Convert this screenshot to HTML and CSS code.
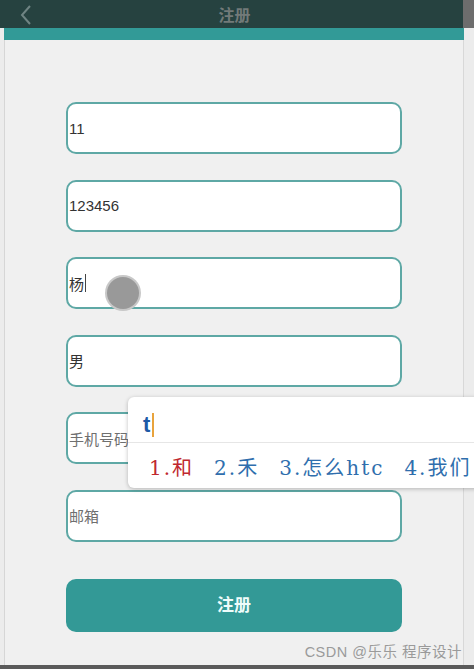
FILE: index.html
```html
<!doctype html>
<html lang='zh-CN'>
<head>
  <title>注册</title>
  <meta charset='utf-8'>
  <link rel="stylesheet" href="styles.css">
</head>
<body>
  <div class='screen'>
    <header class='topbar'>
      <div class='appbar'>
        <svg class='back' width='14' height='22' viewBox='0 0 14 22'>
          <path d='M11 2 L3 11 L11 20' fill='none' stroke='#6f8483' stroke-width='2'/>
        </svg>
        <h1>注册</h1>
      </div>
      <div class='edge'></div>
    </header>

    <main class='frame'>
      <div class='accent'></div>
      <form class='form'>
        <div class='field'>11</div>
        <div class='field'>123456</div>
        <div class='field'>杨<i class='caret'></i></div>
        <div class='field'>男</div>
        <div class='field hint'>手机号码</div>
        <div class='field hint'>邮箱</div>
        <button type='button' class='submit'>注册</button>
      </form>
      <p class='mark'>CSDN @乐乐 程序设计</p>
    </main>
    <div class='bottom'></div>

    <div class='touch'></div>

    <div class='ime'>
      <div class='ime-input'>t<i class='ime-caret'></i></div>
      <ol class='ime-list'>
        <li class='first'>1.和</li>
        <li>2.禾</li>
        <li>3.怎么htc</li>
        <li>4.我们</li>
      </ol>
    </div>
  </div>
</body>
</html>
```

FILE: styles.css
```css
*, html { box-sizing: border-box; }
body { margin: 0; background: #ececec; font: 15px "Liberation Sans", "Noto Sans CJK SC", sans-serif; color: #333; }

.screen { position: relative; width: 474px; height: 669px; overflow: hidden; }

.topbar { display: flex; height: 28px; }
.appbar { width: 463px; background: #264240; position: relative; display: flex; align-items: center; justify-content: center; }
.appbar h1 { margin: 0 0 0 6px; font-size: 16px; font-weight: bold; color: #727a79; }
.back { position: absolute; left: 19px; top: 4px; }
.edge { flex: 1; background: #6d6d6d; }

.frame { margin-left: 4px; width: 460px; height: 637px; background: #f0f0f0; border-left: 1px solid #d6d6d6; border-right: 1px solid #d8d8d8; position: relative; }
.accent { height: 12px; background: #329a97; margin-left: -1px; margin-right: -1px; }

.form { padding: 62px 0 0 61px; display: flex; flex-direction: column; gap: 25.6px; }
.field { width: 336px; height: 52px; background: #fff; border: 2px solid #5ea8a5; border-radius: 10px; display: flex; align-items: center; padding-left: 1px; font-size: 15px; color: #333; }
.field.hint { color: #6f6f6f; }
.caret { display: inline-block; width: 1px; height: 18px; background: #444; margin-left: 1px; }

.submit { margin-top: 11px; width: 336px; height: 53px; padding-bottom: 5px; border: 0; border-radius: 10px; background: #339996; color: #effcfb; font: bold 17px "Noto Sans CJK SC", sans-serif; }

.mark { position: absolute; right: 1px; top: 612px; margin: 0; font: 14.5px "Liberation Sans", "Noto Sans CJK SC", sans-serif; letter-spacing: 0.5px; color: #9a9a9a; }

.bottom { height: 4px; background: #5a5a5a; }

.touch { position: absolute; left: 107px; top: 277px; width: 32px; height: 32px; border-radius: 50%; background: #999; box-shadow: 0 0 0 2px #c8c8c8; }

.ime { position: absolute; left: 128px; top: 397px; width: 370px; height: 91px; background: #fff; border-radius: 6px; box-shadow: 0 1px 4px rgba(0,0,0,0.25); }
.ime-input { height: 46px; padding: 10px 0 0 15px; border-bottom: 1px solid #e6e6e6; font: bold 22px "Liberation Sans", sans-serif; color: #1d5aa6; display: flex; align-items: center; }
.ime-caret { display: inline-block; width: 2px; height: 24px; background: #e8a33c; margin-left: 2px; }
.ime-list { list-style: none; margin: 0; padding: 9px 0 0 21px; display: flex; gap: 20px; font: 20px "DejaVu Serif", "Noto Sans CJK SC", serif; letter-spacing: 2px; color: #2f6ead; white-space: nowrap; }
.ime-list .first { color: #c0282e; }
```
